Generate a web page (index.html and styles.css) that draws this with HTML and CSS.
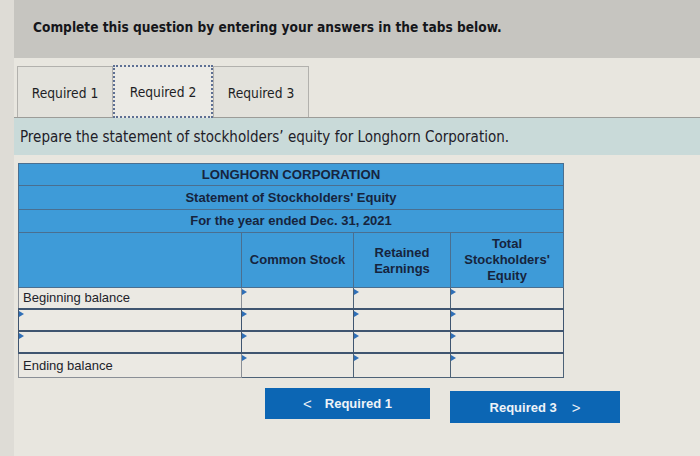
FILE: index.html
```html
<!DOCTYPE html>
<html>
<head>
<meta charset="utf-8">
<link rel="stylesheet" href="styles.css">
</head>
<body>
<div class="page">
  <div class="header">Complete this question by entering your answers in the tabs below.</div>
  <div class="tabs">
    <div class="tab">Required 1</div>
    <div class="tab active">Required 2</div>
    <div class="tab">Required 3</div>
  </div>
  <div class="prompt">Prepare the statement of stockholders’ equity for Longhorn Corporation.</div>
  <table class="stmt">
    <colgroup>
      <col class="c0"><col class="c1"><col class="c2"><col class="c3">
    </colgroup>
    <tr class="h1"><th colspan="4">LONGHORN CORPORATION</th></tr>
    <tr class="h2"><th colspan="4">Statement of Stockholders' Equity</th></tr>
    <tr class="h3"><th colspan="4">For the year ended Dec. 31, 2021</th></tr>
    <tr class="hc">
      <th></th>
      <th>Common Stock</th>
      <th>Retained<br>Earnings</th>
      <th>Total<br>Stockholders'<br>Equity</th>
    </tr>
    <tr class="r1"><td class="lbl">Beginning balance</td><td class="in"></td><td class="in"></td><td class="in"></td></tr>
    <tr class="r2"><td class="in"></td><td class="in"></td><td class="in"></td><td class="in"></td></tr>
    <tr class="r3"><td class="in"></td><td class="in"></td><td class="in"></td><td class="in"></td></tr>
    <tr class="r4"><td class="lbl">Ending balance</td><td class="in"></td><td class="in"></td><td class="in"></td></tr>
  </table>
  <div class="nav">
    <button class="btn prev"><span class="chev">&lt;</span>Required 1</button>
    <button class="btn next">Required 3<span class="chev r">&gt;</span></button>
  </div>
</div>
</body>
</html>
```

FILE: styles.css
```css
html, body {
  margin: 0;
  padding: 0;
}
body {
  width: 700px;
  height: 456px;
  background: #e6e4dd;
  overflow: hidden;
  font-family: "DejaVu Sans Condensed", "DejaVu Sans", sans-serif;
  color: #1b1d24;
}
.page {
  padding-left: 14px;
  background: linear-gradient(to right, #dedcd6 0, #dedcd6 14px, #e8e6df 14px);
  height: 456px;
}
.header {
  background: #c6c5c0;
  height: 58px;
  box-sizing: border-box;
  padding: 19px 0 0 19px;
  font-weight: bold;
  font-size: 13.6px;
  color: #15161a;
}
.tabs {
  display: flex;
  margin-top: 8px;
  padding-left: 3px;
  height: 51px;
  border-bottom: 1px solid #9c9c98;
}
.tab {
  width: 96px;
  box-sizing: border-box;
  border: 1px solid #b2b1ad;
  border-bottom: none;
  background: #e3e2dc;
  display: flex;
  align-items: center;
  justify-content: center;
  font-size: 13.7px;
  color: #1d1e24;
  padding-top: 2px;
}
.tab.active {
  width: 100px;
  background: #ebeae5;
  border: 2px dotted #5d6f93;
  margin-top: -1px;
  height: 53px;
  padding-top: 1px;
}
.prompt {
  background: #c9dad9;
  height: 37px;
  box-sizing: border-box;
  padding: 10px 0 0 6px;
  font-size: 15px;
  color: #1e2028;
}
.stmt {
  margin: 8px 0 0 4px;
  border-collapse: collapse;
  table-layout: fixed;
  width: 545px;
  font-family: "Liberation Sans", Arial, sans-serif;
  font-size: 13px;
}
.c0 { width: 223px; }
.c1 { width: 112px; }
.c2 { width: 97px; }
.c3 { width: 113px; }
.stmt th {
  background: #3e9bd8;
  color: #16243d;
  font-weight: bold;
  border: 1px solid #4a6f90;
  padding: 0;
  text-align: center;
  line-height: 16px;
}
.h1 th { height: 21px; font-size: 13.2px; }
.h2 th { height: 23px; }
.h3 th { height: 22px; }
.hc th { height: 53px; }
.hc th:nth-child(3) { padding-top: 1px; }
.stmt td {
  border: 1px solid #4d6277;
  background: #ebe9e3;
  padding: 0 0 0 4px;
  height: 20px;
  line-height: 16px;
  position: relative;
  color: #22232a;
}
.r2 td, .r3 td { height: 20px; border-width: 2px 1px; border-color: #3f5570; }
.r4 td { height: 23px; }
.stmt td.in::before {
  content: "";
  position: absolute;
  left: 0;
  top: 1px;
  border-left: 5px solid #2f6fb7;
  border-top: 3px solid transparent;
  border-bottom: 3px solid transparent;
}
.stmt td.lbl {
  border-color: #8a8f96;
}
.nav {
  display: flex;
  gap: 20px;
  margin: 10px 0 0 251px;
  align-items: flex-start;
}
.btn {
  background: #0c66b4;
  color: #eef3f8;
  border: none;
  font-family: "Liberation Sans", Arial, sans-serif;
  font-weight: bold;
  font-size: 13px;
  height: 31px;
  padding: 0;
  display: flex;
  align-items: center;
  justify-content: center;
}
.prev { width: 165px; }
.next { width: 170px; margin-top: 3px; height: 32px; }
.chev {
  font-weight: normal;
  font-size: 15px;
  margin-right: 13px;
}
.chev.r {
  margin: 0 0 0 15px;
}
```
